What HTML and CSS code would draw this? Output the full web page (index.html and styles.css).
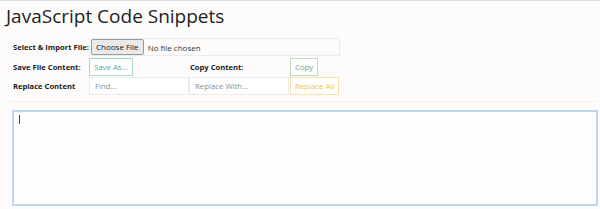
FILE: index.html
```html
<!DOCTYPE html>
<html lang="en">
<head>
    <meta charset="UTF-8">
    <meta name="viewport" content="width=device-width, initial-scale=1.0">
    <title>JavaScript Code Snippets</title>
    <link rel="stylesheet" href="styles.css">
</head>
<body>
    <h1 class="title">JavaScript Code Snippets</h1>

    <!-- 工具栏 -->
    <div class="tools">
        <div class="tools-grid">
            <label class="tools-label">Select &amp; Import File:</label>
            <div class="file-cell">
                <span class="file-btn">Choose File</span>
                <span class="file-name">No file chosen</span>
            </div>

            <label class="tools-label">Save File Content:</label>
            <div class="cell"><a href="javascript:;" class="btn btn-save">Save As...</a></div>
            <label class="tools-label tools-label-mid">Copy Content:</label>
            <div class="cell"><a href="javascript:;" class="btn btn-copy">Copy</a></div>

            <label class="tools-label">Replace Content</label>
            <input type="text" class="list-input" placeholder="Find...">
            <input type="text" class="list-input" placeholder="Replace With...">
            <div class="cell"><a href="javascript:;" class="btn btn-replace">Replace All</a></div>
        </div>
    </div>

    <!-- 编辑区 -->
    <div class="editor">
        <textarea class="editor-text" id="editor-text"></textarea>
        <span class="caret"></span>
    </div>
</body>
</html>
```

FILE: styles.css
```css
* {
    margin: 0;
    padding: 0;
    box-sizing: border-box;
}

html,
body {
    background-color: #fdfcfa;
}

body {
    border-top: 1px solid #dcdcdc;
    font-family: "Open Sans", "Noto Sans", sans-serif;
    color: #222;
}

a {
    text-decoration: none;
}

.title {
    margin: 2px 0 0 6px;
    font-size: 19px;
    font-weight: 400;
    line-height: 26px;
    color: #1e1e1e;
}

/* 工具栏 */

.tools {
    margin: 9px 4px 0 10px;
    padding: 0 0 6px 3px;
    border-bottom: 1px solid #f4efe7;
}

.tools-grid {
    display: grid;
    grid-template-columns: 76px 100px 100px 51px;
    grid-auto-rows: 18px;
    row-gap: 1.5px;
    align-items: center;
}

.tools-label {
    font-size: 7.6px;
    font-weight: 700;
    color: #1a1a1a;
    white-space: nowrap;
}

.tools-label-mid {
    padding-left: 1px;
}

.cell {
    display: flex;
    height: 18px;
}

.file-cell {
    grid-column: span 3;
    height: 18px;
    display: flex;
    align-items: center;
    border: 1px solid #ecebe8;
    padding-left: 1px;
    font-size: 8px;
}

.file-btn {
    height: 16px;
    line-height: 14px;
    padding: 0 4px;
    background-color: #e9e9e9;
    border: 1px solid #9a9a9a;
    border-radius: 2px;
    color: #111;
}

.file-name {
    margin-left: 4px;
    color: #333;
}

.btn {
    display: block;
    height: 18px;
    line-height: 16px;
    padding: 0 4px;
    border: 1px solid;
    background-color: #fff;
    font-size: 7.8px;
    white-space: nowrap;
}

.btn-save {
    color: #5aa9ab;
    border-color: #a9d6d6;
}

.btn-copy {
    margin-left: 1px;
    color: #6cad79;
    border-color: #bcdcc2;
}

.btn-replace {
    margin-left: 1px;
    color: #efc24f;
    border-color: #f6e2a6;
}

.list-input {
    height: 18px;
    width: 100px;
    border: 1px solid #ebebeb;
    background-color: #fff;
    padding-left: 5px;
    font-family: inherit;
    font-size: 7.8px;
    outline: none;
}

.list-input::placeholder {
    color: #8c8c8c;
}

/* 编辑区 */

.editor {
    position: relative;
    margin: 8px 2px 0 12px;
}

.editor-text {
    display: block;
    width: 586px;
    height: 96px;
    border: 2px solid #bcd7ef;
    background-color: #fffefc;
    resize: none;
    outline: none;
}

.caret {
    position: absolute;
    left: 7px;
    top: 5px;
    width: 1px;
    height: 9px;
    background-color: #444;
}
```
